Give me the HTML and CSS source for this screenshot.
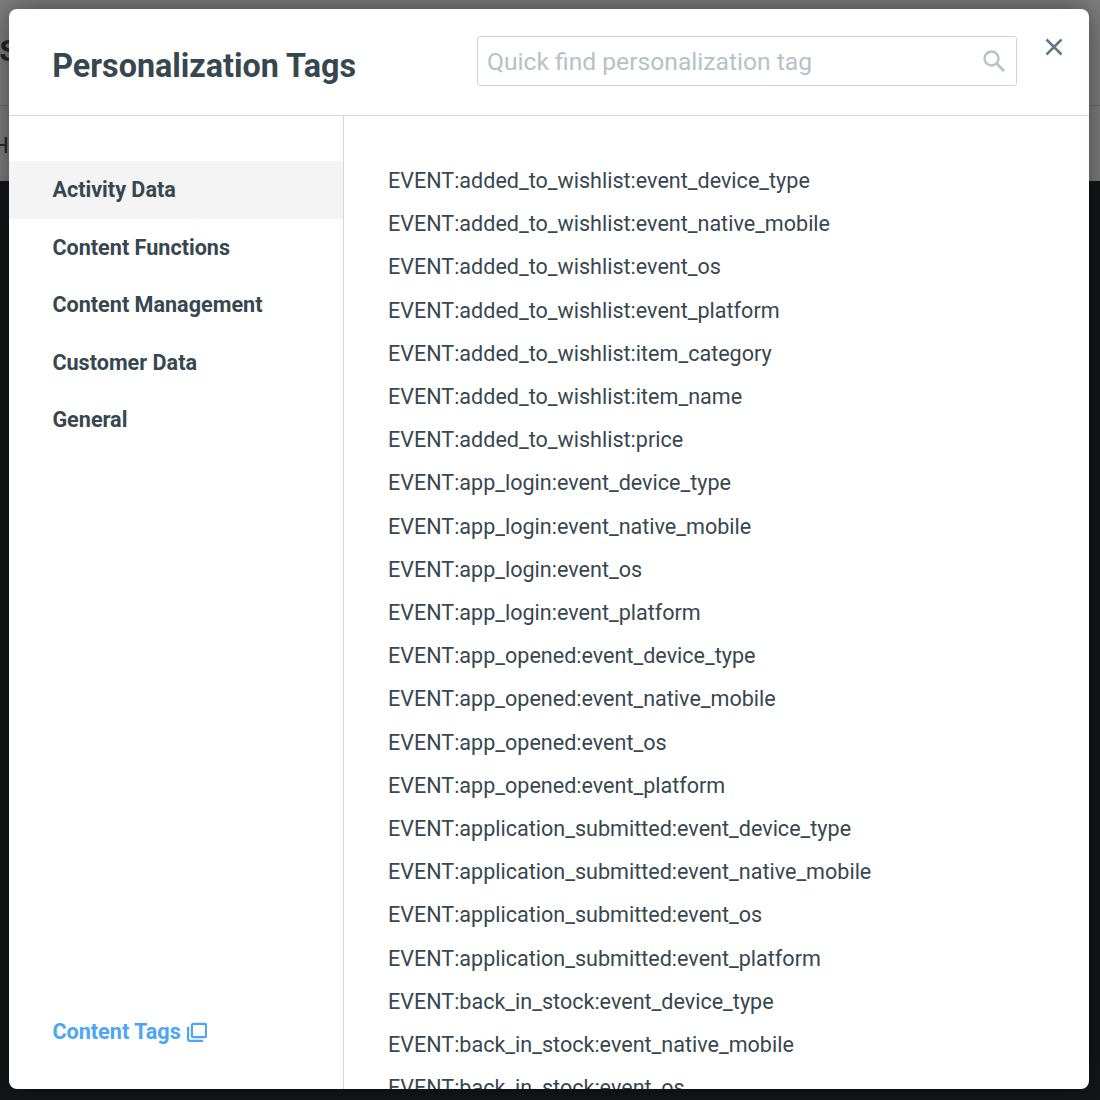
FILE: index.html
```html
<!DOCTYPE html>
<html lang="en">
<head>
    <meta charset="UTF-8">
    <title>Personalization Tags</title>
    <link rel="stylesheet" href="styles.css">
</head>
<body>
    <div class="backdrop">
        <div class="backdrop-top">
            <span class="backdrop-title">GS</span>
        </div>
        <div class="backdrop-nav">
            <span class="backdrop-label">H</span>
        </div>
        <div class="backdrop-dark"></div>
    </div>

    <div class="modal">
        <div class="modal-header">
            <h1 class="modal-title">Personalization Tags</h1>
            <div class="search-box">
                <input class="search-input" type="text" placeholder="Quick find personalization tag">
                <svg class="search-icon" viewBox="0 0 24 24" width="24" height="24">
                    <circle cx="9.5" cy="9.5" r="7" fill="none" stroke="#b4c2c9" stroke-width="2.4"/>
                    <path d="M14.6 14.6 L22 22" fill="none" stroke="#b4c2c9" stroke-width="2.8"/>
                </svg>
            </div>
            <button class="close-button" aria-label="Close">
                <svg viewBox="0 0 18 18" width="18" height="18">
                    <path d="M1.5 1.5 L16.5 16.5 M16.5 1.5 L1.5 16.5" fill="none" stroke="#607786" stroke-width="2.5"/>
                </svg>
            </button>
        </div>
        <div class="modal-body">
            <div class="sidebar">
                <ul class="category-list">
                    <li class="category active">Activity Data</li>
                    <li class="category">Content Functions</li>
                    <li class="category">Content Management</li>
                    <li class="category">Customer Data</li>
                    <li class="category">General</li>
                </ul>
                <a class="content-tags" href="#">
                    Content Tags
                    <svg viewBox="0 0 20 20" width="20" height="20">
                        <rect x="4.9" y="1.9" width="14.2" height="13.2" rx="1.4" fill="none" stroke="#4ca6f8" stroke-width="2.2"/>
                        <path d="M1.1 5 V17 Q1.1 18.9 3 18.9 H16" fill="none" stroke="#4ca6f8" stroke-width="2.2"/>
                    </svg>
                </a>
            </div>
            <div class="tag-list">
                <div class="tag">EVENT:added_to_wishlist:event_device_type</div>
                <div class="tag">EVENT:added_to_wishlist:event_native_mobile</div>
                <div class="tag">EVENT:added_to_wishlist:event_os</div>
                <div class="tag">EVENT:added_to_wishlist:event_platform</div>
                <div class="tag">EVENT:added_to_wishlist:item_category</div>
                <div class="tag">EVENT:added_to_wishlist:item_name</div>
                <div class="tag">EVENT:added_to_wishlist:price</div>
                <div class="tag">EVENT:app_login:event_device_type</div>
                <div class="tag">EVENT:app_login:event_native_mobile</div>
                <div class="tag">EVENT:app_login:event_os</div>
                <div class="tag">EVENT:app_login:event_platform</div>
                <div class="tag">EVENT:app_opened:event_device_type</div>
                <div class="tag">EVENT:app_opened:event_native_mobile</div>
                <div class="tag">EVENT:app_opened:event_os</div>
                <div class="tag">EVENT:app_opened:event_platform</div>
                <div class="tag">EVENT:application_submitted:event_device_type</div>
                <div class="tag">EVENT:application_submitted:event_native_mobile</div>
                <div class="tag">EVENT:application_submitted:event_os</div>
                <div class="tag">EVENT:application_submitted:event_platform</div>
                <div class="tag">EVENT:back_in_stock:event_device_type</div>
                <div class="tag">EVENT:back_in_stock:event_native_mobile</div>
                <div class="tag">EVENT:back_in_stock:event_os</div>
            </div>
        </div>
    </div>
</body>
</html>
```

FILE: styles.css
```css
html, body {
    margin: 0;
    height: 1100px;
    overflow: hidden;
}
body {
    font-family: Roboto, "Liberation Sans", sans-serif;
    background-color: #15161a;
    position: relative;
}
.backdrop-top {
    height: 105px;
    background-color: #808080;
    border-bottom: 1px solid #6c6c6c;
    overflow: hidden;
}
.backdrop-title {
    display: block;
    margin: 28px 0 0 -21px;
    font-size: 30px;
    line-height: 46px;
    font-weight: 700;
    color: #20272c;
}
.backdrop-nav {
    height: 75px;
    background-color: #808080;
    overflow: hidden;
}
.backdrop-label {
    display: block;
    margin: 26px 0 0 -7px;
    font-size: 22px;
    line-height: 28px;
    color: #20272c;
}
.modal {
    position: absolute;
    top: 9px;
    left: 9px;
    width: 1080px;
    height: 1080px;
    background-color: white;
    border-radius: 8px;
    overflow: hidden;
    display: flex;
    flex-direction: column;
    box-shadow: 0 0 30px rgba(0,0,0,0.5);
}
.modal-header {
    height: 106px;
    flex-shrink: 0;
    border-bottom: 1px solid #d5d8da;
    position: relative;
    display: flex;
    align-items: flex-start;
    padding-left: 43.2px;
}
.modal-title {
    margin: 34px 0 0 0;
    width: 424.8px;
    font-size: 32.3px;
    line-height: 46px;
    font-weight: 700;
    color: #37474f;
}
.search-box {
    position: relative;
    margin-top: 27px;
    width: 540px;
    height: 50px;
}
.search-input {
    width: 100%;
    height: 100%;
    box-sizing: border-box;
    border: 1px solid #ccd5da;
    border-radius: 3px;
    padding: 0 50px 0 9px;
    font-family: inherit;
    font-size: 24.65px;
    outline: none;
}
.search-input::placeholder {
    color: #b4c2c9;
    opacity: 1;
}
.search-icon {
    position: absolute;
    top: 13px;
    right: 11px;
}
.close-button {
    position: absolute;
    top: 29px;
    right: 26px;
    padding: 0;
    border: none;
    background: none;
    width: 18px;
    height: 18px;
    cursor: pointer;
}
.modal-body {
    flex: 1;
    display: flex;
    min-height: 0;
}
.sidebar {
    width: 334px;
    flex-shrink: 0;
    border-right: 1px solid #d5d8da;
    display: flex;
    flex-direction: column;
    justify-content: space-between;
    padding: 45px 0 45px;
}
.category-list {
    list-style: none;
    margin: 0;
    padding: 0;
}
.category {
    height: 57.5px;
    line-height: 57.5px;
    padding-left: 43.4px;
    font-size: 21.6px;
    font-weight: 700;
    color: #37474f;
}
.category.active {
    background-color: #f4f4f4;
}
.content-tags {
    display: flex;
    align-items: center;
    gap: 6px;
    padding-left: 43.4px;
    font-size: 21.6px;
    font-weight: 700;
    color: #4ca6f8;
    text-decoration: none;
}
.tag-list {
    flex: 1;
    padding: 43px 0 0 44px;
    overflow: hidden;
}
.tag {
    height: 43.21px;
    line-height: 43.21px;
    font-size: 21.56px;
    color: #37474f;
    white-space: nowrap;
}
```
